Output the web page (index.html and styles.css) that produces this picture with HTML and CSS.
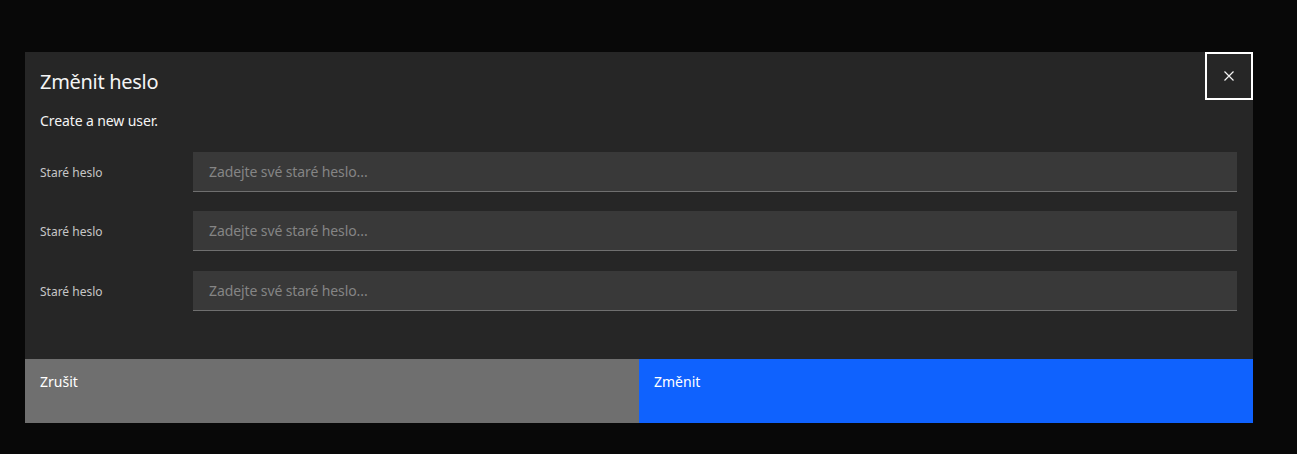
FILE: index.html
```html
<!DOCTYPE html>
<html lang="cs">
<head>
<meta charset="utf-8">
<title>Změnit heslo</title>
<link rel="stylesheet" href="styles.css">
</head>
<body>
<div class="page">
  <div class="modal">
    <button class="close" aria-label="Zavřít">
      <svg width="16" height="16" viewBox="0 0 16 16" aria-hidden="true">
        <path d="M3.5 3.5 L12.5 12.5 M12.5 3.5 L3.5 12.5" stroke="#f4f4f4" stroke-width="1.2" fill="none"/>
      </svg>
    </button>
    <div class="header">
      <h2 class="title">Změnit heslo</h2>
    </div>
    <div class="content">
      <p class="desc">Create a new user.</p>
      <div class="rows">
        <div class="row">
          <label class="label">Staré heslo</label>
          <input class="input" type="password" placeholder="Zadejte své staré heslo...">
        </div>
        <div class="row">
          <label class="label">Staré heslo</label>
          <input class="input" type="password" placeholder="Zadejte své staré heslo...">
        </div>
        <div class="row">
          <label class="label">Staré heslo</label>
          <input class="input" type="password" placeholder="Zadejte své staré heslo...">
        </div>
      </div>
    </div>
    <div class="footer">
      <button class="btn btn-secondary">Zrušit</button>
      <button class="btn btn-primary">Změnit</button>
    </div>
  </div>
</div>
</body>
</html>
```

FILE: styles.css
```css
* { box-sizing: border-box; }
html, body { margin: 0; padding: 0; }
body {
  background: #080808;
  font-family: "Noto Sans", "Liberation Sans", sans-serif;
  color: #f4f4f4;
  width: 1297px;
  height: 454px;
  overflow: hidden;
}
.page {
  padding: 52px 0 0 25px;
}
.modal {
  position: relative;
  width: 1228px;
  background: #262626;
  display: flex;
  flex-direction: column;
}
.close {
  position: absolute;
  top: 0;
  right: 0;
  width: 48px;
  height: 48px;
  border: 2px solid #ffffff;
  background: transparent;
  padding: 0;
  display: flex;
  align-items: center;
  justify-content: center;
  cursor: pointer;
}
.header {
  padding: 16px 64px 0 15px;
}
.title {
  margin: 0;
  font-size: 20px;
  line-height: 28px;
  font-weight: 400;
  letter-spacing: -0.3px;
  color: #f4f4f4;
}
.content {
  padding: 15px 16px 48px 15px;
}
.desc {
  margin: 0;
  font-size: 14px;
  line-height: 20px;
  letter-spacing: -0.1px;
  color: #f4f4f4;
}
.rows {
  margin-top: 21px;
  display: flex;
  flex-direction: column;
}
.row {
  display: flex;
  align-items: center;
  margin-top: 19px;
}
.row:first-child { margin-top: 0; }
.row:last-child { margin-top: 20px; }
.label {
  width: 153px;
  flex: none;
  font-size: 12px;
  line-height: 16px;
  padding-top: 2px;
  color: #c6c6c6;
}
.input {
  flex: 1;
  height: 40px;
  background: #393939;
  border: none;
  border-bottom: 1px solid #6f6f6f;
  padding: 0 16px;
  font-family: inherit;
  font-size: 14px;
  letter-spacing: -0.1px;
  color: #f4f4f4;
  outline: none;
}
.input::placeholder {
  color: #858585;
}
.footer {
  display: flex;
  height: 64px;
}
.btn {
  flex: 1;
  border: none;
  text-align: left;
  display: flex;
  align-items: flex-start;
  padding: 14px 15px;
  font-family: inherit;
  font-size: 14px;
  line-height: 18px;
  color: #ffffff;
  cursor: pointer;
}
.btn-secondary { background: #6f6f6f; }
.btn-primary { background: #0f62fe; }
```
